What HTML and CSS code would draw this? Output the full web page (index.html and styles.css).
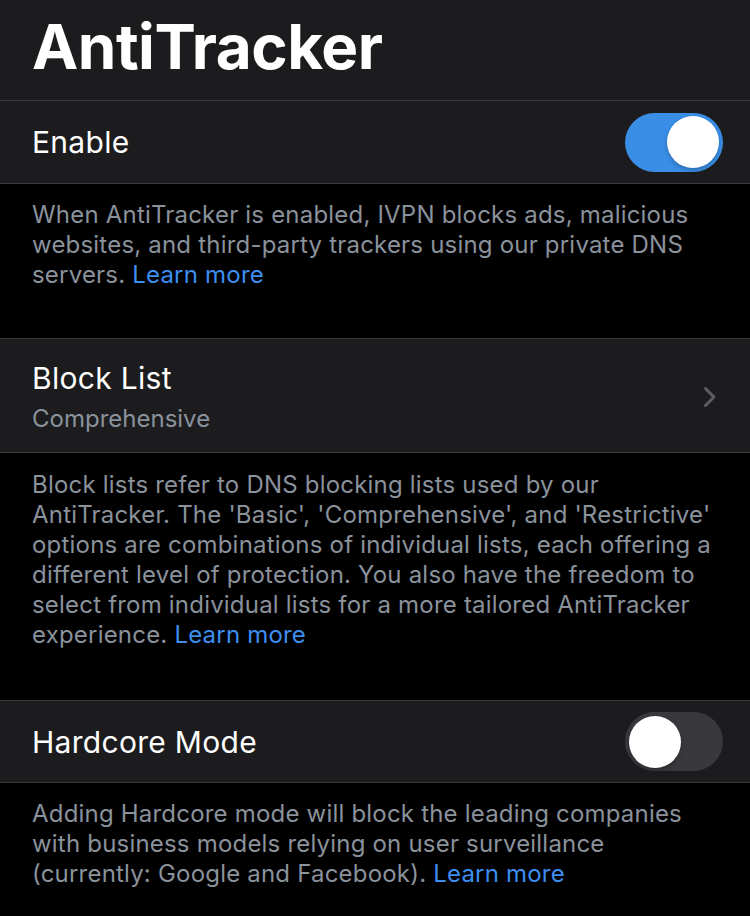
FILE: index.html
```html
<!DOCTYPE html>
<html>
<head>
<meta charset="utf-8">
<link rel="stylesheet" href="styles.css">
</head>
<body>
<div class="screen">
  <header class="header">
    <h1 class="title">AntiTracker</h1>
  </header>

  <div class="row row-single">
    <span class="row-label">Enable</span>
    <span class="toggle toggle-on"><span class="knob"></span></span>
  </div>
  <div class="footer footer-first">
    <p class="footnote">When AntiTracker is enabled, IVPN blocks ads, malicious websites, and third-party trackers using our private DNS servers. <a class="link">Learn more</a></p>
  </div>

  <div class="row row-double">
    <div class="row-text">
      <span class="row-label">Block List</span>
      <span class="row-detail">Comprehensive</span>
    </div>
    <svg class="chevron" width="14" height="22" viewBox="0 0 14 22"><path d="M2.5 2.5 L11 11 L2.5 19.5" fill="none" stroke="#5c5c61" stroke-width="3" stroke-linecap="round" stroke-linejoin="round"/></svg>
  </div>
  <div class="footer footer-second">
    <p class="footnote">Block lists refer to DNS blocking lists used by our AntiTracker. The 'Basic', 'Comprehensive', and 'Restrictive' options are combinations of individual lists, each offering a different level of protection. You also have the freedom to select from individual lists for a more tailored AntiTracker experience. <a class="link">Learn more</a></p>
  </div>

  <div class="row row-single">
    <span class="row-label">Hardcore Mode</span>
    <span class="toggle toggle-off"><span class="knob"></span></span>
  </div>
  <div class="footer footer-third">
    <p class="footnote">Adding Hardcore mode will block the leading companies with business models relying on user surveillance (currently: Google and Facebook). <a class="link">Learn more</a></p>
  </div>
</div>
</body>
</html>
```

FILE: styles.css
```css
html, body {
  margin: 0;
  padding: 0;
  background: #000;
}

.screen {
  width: 750px;
  height: 916px;
  overflow: hidden;
  background: #000;
  font-family: Inter, "Noto Sans", sans-serif;
  color: #fff;
}

.header {
  background: #1c1c1e;
  height: 101px;
  padding: 0 32px;
  box-sizing: border-box;
  border-bottom: 1px solid #38383a;
}

.title {
  margin: 0;
  font-size: 62px;
  font-weight: 700;
  line-height: 94px;
  letter-spacing: -0.5px;
}

.row {
  background: #1c1c1e;
  border-bottom: 1px solid #38383a;
  display: flex;
  align-items: center;
  justify-content: space-between;
  padding: 0 27px 0 32px;
  box-sizing: border-box;
}

.footer + .row {
  border-top: 1px solid #38383a;
}

.row-single {
  height: 83px;
}

.row-double {
  height: 115px;
  padding-top: 2px;
}

.row-text {
  display: flex;
  flex-direction: column;
}

.row-label {
  font-size: 30px;
  line-height: 36px;
  letter-spacing: 0.3px;
}

.row-detail {
  font-size: 24px;
  line-height: 28px;
  color: #8a929c;
  margin-top: 9px;
}

.chevron {
  display: block;
  margin-right: 6px;
}

.toggle {
  width: 98px;
  height: 59px;
  border-radius: 30px;
  display: flex;
  align-items: center;
  padding: 0 4px;
  box-sizing: border-box;
}

.toggle-on {
  background: #3a8ee6;
  justify-content: flex-end;
}

.toggle-off {
  background: #39393d;
  justify-content: flex-start;
}

.knob {
  width: 52px;
  height: 52px;
  border-radius: 50%;
  background: #fff;
  box-shadow: 0 2px 4px rgba(0,0,0,0.25);
}

.footer {
  padding: 0 32px;
  box-sizing: border-box;
}

.footer-first {
  height: 154px;
  padding-top: 16px;
}

.footer-second {
  height: 247px;
  padding-top: 17px;
  padding-right: 10px;
}

.footer-third {
  padding-top: 16px;
}

.footnote {
  margin: 0;
  font-size: 24px;
  line-height: 30px;
  letter-spacing: 0.2px;
  color: #8a929c;
}

.link {
  color: #3d8ef0;
}
```
